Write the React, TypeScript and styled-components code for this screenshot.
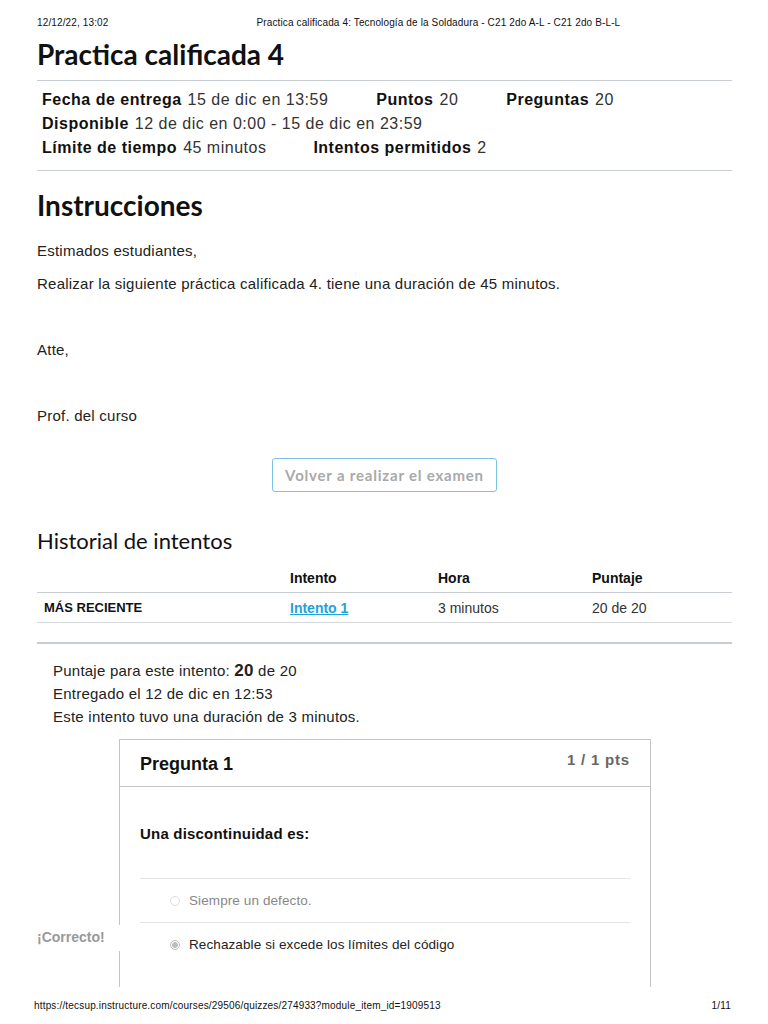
import React from 'react'
import styled, { createGlobalStyle } from 'styled-components'

const GlobalStyle = createGlobalStyle`
  html, body {
    margin: 0;
    padding: 0;
    background: #fff;
  }
  body {
    font-family: "Liberation Sans", Arial, sans-serif;
    color: #222;
  }
`

const Page = styled.div`
  width: 768px;
  height: 1024px;
  display: flex;
  flex-direction: column;
  overflow: hidden;
`

const PrintBar = styled.div`
  display: flex;
  align-items: center;
  font-size: 10px;
  line-height: 12px;
  letter-spacing: ${p => (p.$bottom ? '0.17px' : '0.13px')};
  color: #111;
  padding: ${p => (p.$bottom ? '0 37px 0 34px' : '17px 37px 0 37px')};
  height: ${p => (p.$bottom ? '37px' : '12px')};
  box-sizing: content-box;
`

const BarTitle = styled.span`
  margin-left: 148px;
`

const BarRight = styled.span`
  margin-left: auto;
`

const Main = styled.main`
  flex: 1;
  overflow: hidden;
  padding: 0 36px 0 37px;
`

const Title = styled.h1`
  font-family: Lato, sans-serif;
  font-weight: 700;
  font-size: 28px;
  line-height: 34px;
  margin: 8px 0 9px 0;
  color: #111;
`

const Rule = styled.hr`
  border: 0;
  border-top: ${p => (p.$thick ? '2px' : '1px')} solid #c7cdd1;
  margin: 0;
`

const Details = styled.div`
  padding: 7px 5px 10px 5px;
`

const DetailRow = styled.div`
  display: flex;
  font-size: 16px;
  line-height: 24px;
  letter-spacing: 0.5px;
`

const Detail = styled.span`
  margin-right: ${p => p.$gap ?? 0}px;
  color: #333;
  b {
    color: #111;
    margin-right: 6px;
  }
`

const Heading = styled.h2`
  font-family: Lato, sans-serif;
  font-weight: 700;
  font-size: 28px;
  line-height: 34px;
  margin: 17px 0 19px 0;
  color: #111;
`

const Paragraphs = styled.div`
  display: flex;
  flex-direction: column;
  gap: 13px;
`

const Para = styled.p`
  margin: 0;
  font-size: 15px;
  line-height: 20px;
  letter-spacing: 0.23px;
  min-height: 20px;
  color: #222;
`

const ButtonRow = styled.div`
  display: flex;
  justify-content: center;
  margin-top: 32px;
`

const RetakeButton = styled.button`
  width: 225px;
  height: 34px;
  background: #fff;
  border: 1px solid #7cc3e3;
  border-radius: 3px;
  font-family: Lato, sans-serif;
  font-weight: 700;
  font-size: 15px;
  letter-spacing: 0.8px;
  color: #a9a9a9;
`

const SubHeading = styled.h3`
  font-family: Lato, sans-serif;
  font-weight: 400;
  font-size: 22px;
  line-height: 28px;
  margin: 35px 0 8px 0;
  color: #111;
`

const Table = styled.table`
  width: 100%;
  border-collapse: collapse;
  margin-bottom: 19px;
  font-size: 14px;
`

const Th = styled.th`
  text-align: left;
  font-weight: 700;
  height: 29px;
  padding: 0;
  border-bottom: 1px solid #c7cdd1;
  color: #111;
`

const Td = styled.td`
  height: 29px;
  padding: 0;
  border-bottom: 1px solid #d5d9dc;
  color: #333;
  font-size: ${p => (p.$small ? '13px' : '14px')};
  font-weight: ${p => (p.$bold ? 700 : 400)};
  &:first-child {
    padding-left: 7px;
    color: #111;
  }
`

const AttemptLink = styled.a`
  color: #1fa2dc;
  font-weight: 700;
  text-decoration: underline;
`

const Summary = styled.div`
  padding: 15px 0 0 16px;
  font-size: 15px;
  line-height: 23px;
  letter-spacing: 0.23px;
  color: #222;
  b {
    font-size: 17px;
  }
`

const Card = styled.section`
  position: relative;
  width: 530px;
  margin: 11px 0 0 82px;
  border: 1px solid #c4c4c4;
  border-bottom: 0;
  padding-bottom: 60px;
`

const CardHeader = styled.header`
  display: flex;
  justify-content: space-between;
  align-items: flex-start;
  height: 46px;
  padding: 0 20px;
  border-bottom: 1px solid #c4c4c4;
`

const QuestionName = styled.span`
  font-weight: 700;
  font-size: 18px;
  line-height: 20px;
  margin-top: 14px;
  color: #111;
`

const Points = styled.span`
  font-weight: 700;
  font-size: 15px;
  line-height: 20px;
  letter-spacing: 0.8px;
  margin-top: 10px;
  color: #666;
`

const CardBody = styled.div`
  padding: 37px 20px 0 20px;
`

const QuestionText = styled.p`
  margin: 0 0 34px 0;
  font-weight: 700;
  font-size: 15px;
  line-height: 20px;
  letter-spacing: 0.2px;
  color: #111;
`

const Answer = styled.div`
  display: flex;
  align-items: center;
  height: 43px;
  padding-left: 30px;
  border-top: 1px solid #e4e4e4;
  font-size: 13.5px;
  letter-spacing: 0.1px;
  color: ${p => (p.$selected ? '#222' : '#888')};
`

const Radio = styled.span`
  width: 10px;
  height: 10px;
  border-radius: 50%;
  border: 1px solid ${p => (p.$selected ? '#bbb' : '#ddd')};
  margin-right: 9px;
  box-sizing: border-box;
  background: ${p => (p.$selected ? 'radial-gradient(circle, #bdbdbd 0 2.6px, #fff 3.2px)' : '#fff')};
`

const CorrectTag = styled.span`
  position: absolute;
  left: -83px;
  top: 185px;
  width: 90px;
  padding: 4px 0 6px 0;
  background: #fff;
  font-weight: 700;
  font-size: 14px;
  color: #999;
`

const App = () => {
  return (
    <Page>
      <GlobalStyle />
      <PrintBar>
        <span>12/12/22, 13:02</span>
        <BarTitle>Practica calificada 4: Tecnología de la Soldadura - C21 2do A-L - C21 2do B-L-L</BarTitle>
      </PrintBar>
      <Main>
        <Title>Practica calificada 4</Title>
        <Rule />
        <Details>
          <DetailRow>
            <Detail $gap={48}><b>Fecha de entrega</b>15 de dic en 13:59</Detail>
            <Detail $gap={48}><b>Puntos</b>20</Detail>
            <Detail><b>Preguntas</b>20</Detail>
          </DetailRow>
          <DetailRow>
            <Detail><b>Disponible</b>12 de dic en 0:00 - 15 de dic en 23:59</Detail>
          </DetailRow>
          <DetailRow>
            <Detail $gap={47}><b>Límite de tiempo</b>45 minutos</Detail>
            <Detail><b>Intentos permitidos</b>2</Detail>
          </DetailRow>
        </Details>
        <Rule />
        <Heading>Instrucciones</Heading>
        <Paragraphs>
          <Para>Estimados estudiantes,</Para>
          <Para>Realizar la siguiente práctica calificada 4. tiene una duración de 45 minutos.</Para>
          <Para />
          <Para>Atte,</Para>
          <Para />
          <Para>Prof. del curso</Para>
        </Paragraphs>
        <ButtonRow>
          <RetakeButton>Volver a realizar el examen</RetakeButton>
        </ButtonRow>
        <SubHeading>Historial de intentos</SubHeading>
        <Table>
          <colgroup>
            <col style={{ width: 253 }} />
            <col style={{ width: 148 }} />
            <col style={{ width: 154 }} />
            <col />
          </colgroup>
          <thead>
            <tr>
              <Th></Th>
              <Th>Intento</Th>
              <Th>Hora</Th>
              <Th>Puntaje</Th>
            </tr>
          </thead>
          <tbody>
            <tr>
              <Td $small $bold>MÁS RECIENTE</Td>
              <Td><AttemptLink href="#">Intento 1</AttemptLink></Td>
              <Td>3 minutos</Td>
              <Td>20 de 20</Td>
            </tr>
          </tbody>
        </Table>
        <Rule $thick />
        <Summary>
          <div>Puntaje para este intento: <b>20</b> de 20</div>
          <div>Entregado el 12 de dic en 12:53</div>
          <div>Este intento tuvo una duración de 3 minutos.</div>
        </Summary>
        <Card>
          <CardHeader>
            <QuestionName>Pregunta 1</QuestionName>
            <Points>1 / 1 pts</Points>
          </CardHeader>
          <CardBody>
            <QuestionText>Una discontinuidad es:</QuestionText>
            <Answer>
              <Radio />
              Siempre un defecto.
            </Answer>
            <Answer $selected>
              <Radio $selected />
              Rechazable si excede los límites del código
            </Answer>
          </CardBody>
          <CorrectTag>¡Correcto!</CorrectTag>
        </Card>
      </Main>
      <PrintBar $bottom>
        <span>https://tecsup.instructure.com/courses/29506/quizzes/274933?module_item_id=1909513</span>
        <BarRight>1/11</BarRight>
      </PrintBar>
    </Page>
  )
}

export default App
